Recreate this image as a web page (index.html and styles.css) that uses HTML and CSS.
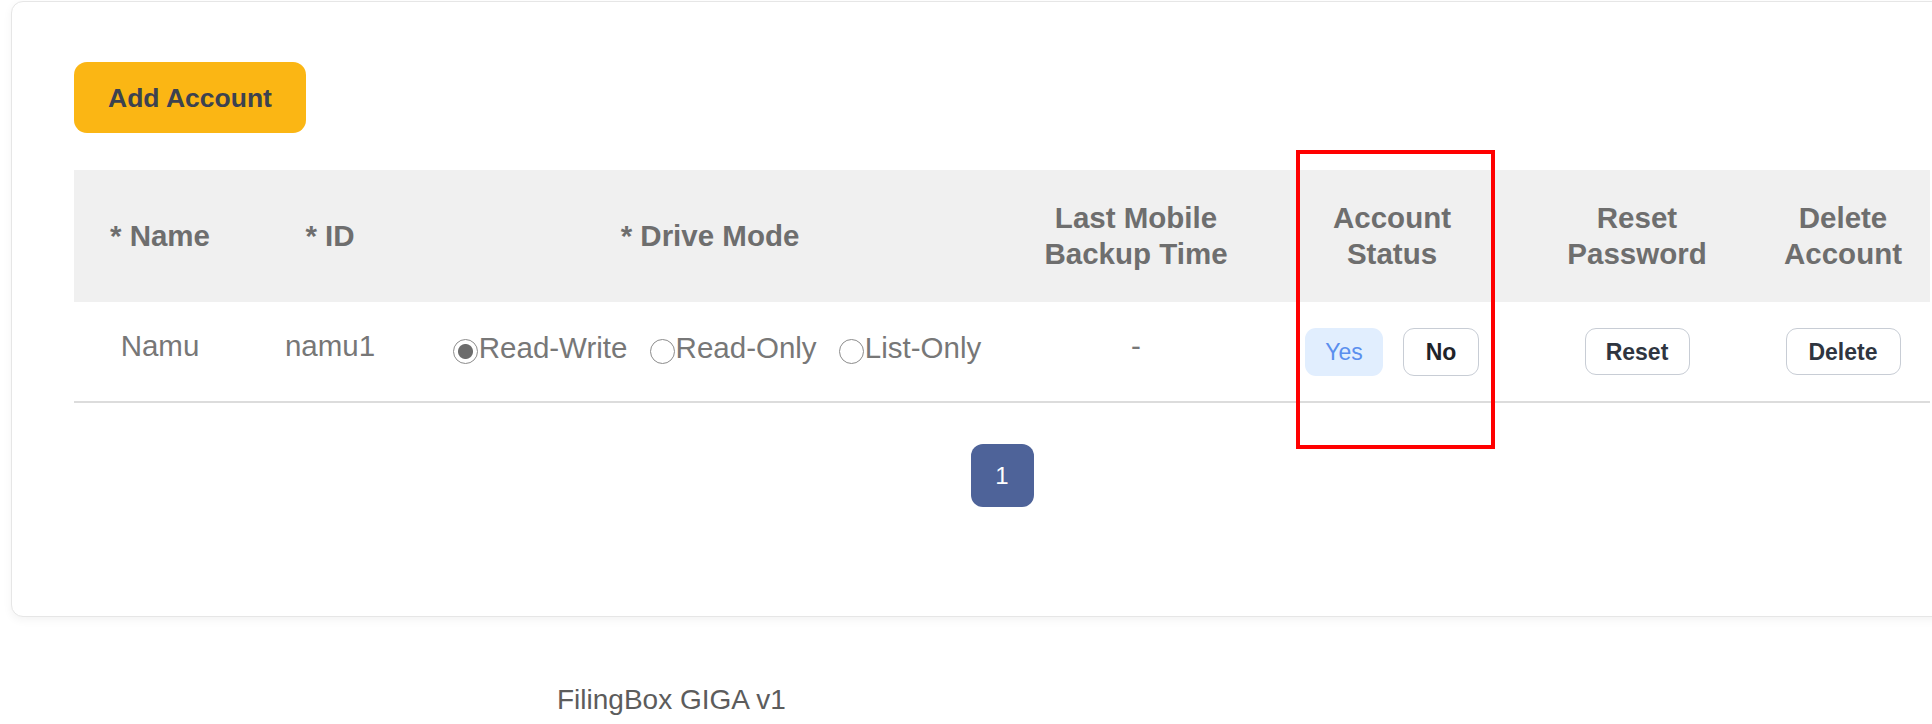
FILE: index.html
```html
<!DOCTYPE html>
<html lang="en">
<head>
<meta charset="utf-8">
<title>Accounts</title>
<link rel="stylesheet" href="styles.css">
</head>
<body>
  <div class="card">
    <button class="btn-add">Add Account</button>
    <div class="grid">
      <div class="thead">
        <div class="th">* Name</div>
        <div class="th">* ID</div>
        <div class="th">* Drive Mode</div>
        <div class="th">Last Mobile<br>Backup Time</div>
        <div class="th">Account<br>Status</div>
        <div class="th">Reset<br>Password</div>
        <div class="th">Delete<br>Account</div>
      </div>
      <div class="trow">
        <div class="td">Namu</div>
        <div class="td">namu1</div>
        <div class="td td-modes">
          <span class="opt"><span class="radio checked"></span>Read-Write</span>
          <span class="opt"><span class="radio"></span>Read-Only</span>
          <span class="opt"><span class="radio"></span>List-Only</span>
        </div>
        <div class="td">-</div>
        <div class="td td-btn">
          <span class="pill pill-yes">Yes</span>
          <span class="pill pill-no">No</span>
        </div>
        <div class="td td-btn"><span class="pill pill-action pill-reset">Reset</span></div>
        <div class="td td-btn"><span class="pill pill-action pill-delete">Delete</span></div>
      </div>
    </div>
    <div class="pager"><span class="page">1</span></div>
  </div>
  <div class="footer">FilingBox GIGA v1</div>
  <div class="highlight"></div>
</body>
</html>
```
FILE: styles.css
```css
html, body {
  margin: 0;
  padding: 0;
}
body {
  width: 1932px;
  height: 724px;
  overflow: hidden;
  background: #ffffff;
  font-family: "Liberation Sans", Arial, sans-serif;
  position: relative;
}
.card {
  box-sizing: border-box;
  width: 1990px;
  margin: 1px 0 0 11px;
  padding: 60px 62px 109px;
  background: #fff;
  border: 1px solid #e6e6e6;
  border-radius: 12px;
  box-shadow: 0 3px 10px rgba(0, 0, 0, 0.05);
}
.btn-add {
  display: block;
  width: 232px;
  height: 71px;
  margin: 0 0 37px;
  padding: 2px 0 0;
  border: none;
  border-radius: 13px;
  background: #fbb614;
  color: #3c4250;
  font-family: inherit;
  font-weight: bold;
  font-size: 26.5px;
}
.grid {
  width: 1856px;
}
.thead, .trow {
  display: grid;
  grid-template-columns: 172px 168px 592px 260px 252px 238px 174px;
}
.thead {
  height: 132px;
  background: #f0f0f0;
  align-items: center;
}
.th {
  text-align: center;
  font-weight: bold;
  font-size: 29.5px;
  line-height: 36px;
  color: #6e6e6e;
}
.trow {
  height: 99px;
  border-bottom: 2px solid #dcdcdc;
  align-items: start;
}
.td {
  text-align: center;
  font-size: 29.5px;
  line-height: 34px;
  color: #777;
  padding-top: 27px;
  white-space: nowrap;
}
.td-modes {
  padding-left: 14px;
  padding-top: 29px;
}
.opt + .opt {
  margin-left: 14px;
}
.radio {
  display: inline-block;
  box-sizing: border-box;
  width: 25px;
  height: 25px;
  margin-right: 1px;
  border: 1.5px solid #8c8c8c;
  border-radius: 50%;
  background: #fff;
  vertical-align: -6px;
}
.radio.checked {
  background: radial-gradient(circle, #6c6c6c 0 7px, #ffffff 8px);
}
.td-btn {
  padding-top: 26px;
  display: flex;
  justify-content: center;
  gap: 20px;
}
.pill {
  box-sizing: border-box;
  display: inline-flex;
  align-items: center;
  justify-content: center;
  height: 48px;
  border-radius: 11px;
  font-size: 23px;
}
.pill-yes {
  width: 78px;
  background: #e1eefe;
  color: #5b8fee;
}
.pill-no {
  width: 76px;
  border: 1.5px solid #c8cdd5;
  background: #fff;
  color: #1f2329;
  font-weight: bold;
}
.pill-action {
  height: 47px;
  border: 1.5px solid #c8cdd5;
  background: #fff;
  color: #2f3540;
  font-weight: bold;
}
.pill-reset {
  width: 105px;
}
.pill-delete {
  width: 115px;
}
.pager {
  width: 1856px;
  margin-top: 41px;
  display: flex;
  justify-content: center;
}
.page {
  width: 63px;
  height: 63px;
  border-radius: 12px;
  background: #4e6399;
  color: #fff;
  display: flex;
  align-items: center;
  justify-content: center;
  font-size: 24px;
}
.footer {
  margin-top: 67px;
  padding-left: 557px;
  font-size: 28px;
  line-height: 32px;
  color: #5c5c5c;
}
.highlight {
  position: absolute;
  left: 1296px;
  top: 150px;
  width: 199px;
  height: 299px;
  box-sizing: border-box;
  border: 4px solid #ff0000;
}
```
